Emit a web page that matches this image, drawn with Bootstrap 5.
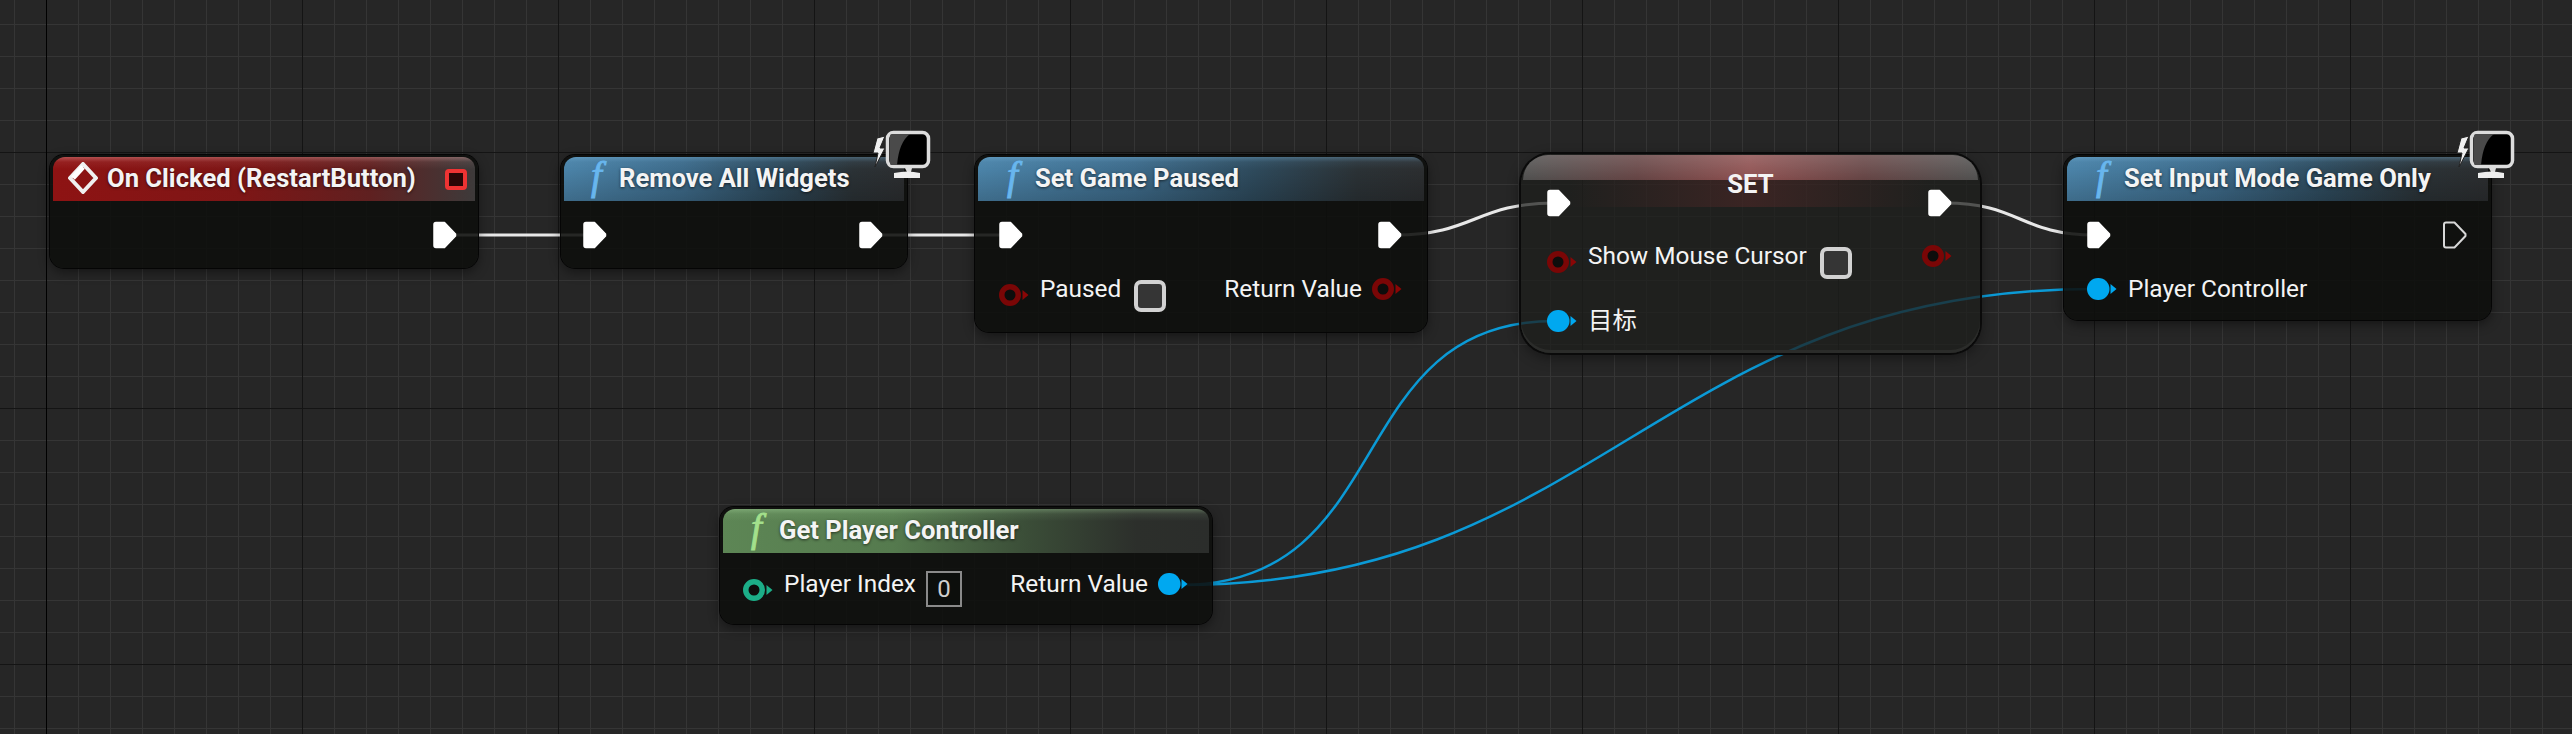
<!doctype html>
<html lang="zh">
<head>
<meta charset="utf-8">
<title>Blueprint</title>
<link href="https://cdn.jsdelivr.net/npm/bootstrap@5.3.0/dist/css/bootstrap.min.css" rel="stylesheet">
<style>
html,body{margin:0;height:100%;background:#262626;overflow:hidden}
.bp-canvas{position:relative;width:2572px;height:734px;overflow:hidden;background-color:#262626;font-family:Roboto,"Noto Sans CJK SC",sans-serif;color:#f4f4f4;
background-image:
 linear-gradient(90deg,#000 1px,transparent 1px),
 linear-gradient(90deg,#141414 1px,transparent 1px),
 linear-gradient(#141414 1px,transparent 1px),
 linear-gradient(90deg,#353535 1px,transparent 1px),
 linear-gradient(#353535 1px,transparent 1px);
background-size:2572px 734px,256px 256px,256px 256px,32px 32px,32px 32px;
background-repeat:no-repeat,repeat,repeat,repeat,repeat;
background-position:46px 0,46px 0,0 152px,14px 0,0 24px}
.bp-wires{position:absolute;left:0;top:0;width:2572px;height:734px}
.bp-node{position:absolute;background:rgba(13,15,12,.89);border-radius:14px;box-shadow:0 0 0 1px #050505,0 4px 12px rgba(0,0,0,.45);font-size:24.4px;line-height:32px}
.n-click{left:50px;top:155px;width:428px;height:113px}
.n-remove{left:561px;top:155px;width:346px;height:113px}
.n-pause{left:975px;top:155px;width:452px;height:177px}
.n-set{left:1521px;top:154px;width:459px;height:199px;border-radius:30px;background:rgba(30,31,29,.74);box-shadow:0 0 0 2px #0a0a0a,inset 0 -3px 0 #2b2c2a,0 4px 14px rgba(0,0,0,.45)}
.n-input{left:2064px;top:155px;width:427px;height:165px}
.n-player{left:720px;top:507px;width:492px;height:117px}
.bp-head{height:44px;margin:2px 3px 0;padding-bottom:2px;border-radius:12px 12px 0 0;font-weight:700;font-size:25.6px;white-space:nowrap;text-shadow:0 1px 3px rgba(0,0,0,.6)}
.h-blue{background:linear-gradient(180deg,rgba(130,190,230,.35) 0,rgba(130,190,230,.08) 5px,rgba(0,0,0,0) 12px,rgba(0,0,0,.18) 100%),linear-gradient(90deg,#4b83a8 0,#3d6a89 35%,#2e4a5c 62%,#2b3236 85%,#2c2e30 100%)}
.h-red{background:linear-gradient(180deg,rgba(255,190,190,.35) 0,rgba(255,190,190,.08) 5px,rgba(0,0,0,0) 12px),linear-gradient(90deg,#8e1313 0,#7d1616 45%,#5f2020 75%,#3d3a3a 100%)}
.h-green{background:linear-gradient(180deg,rgba(190,240,180,.3) 0,rgba(190,240,180,.08) 5px,rgba(0,0,0,0) 12px),linear-gradient(90deg,#5d8655 0,#557a4e 35%,#3b4e38 62%,#2c2f2b 85%,#2b2d2b 100%)}
.h-set{position:absolute;left:2px;right:2px;top:1px;height:25px;border-radius:28px 28px 0 0;background:linear-gradient(180deg,rgba(255,255,255,.18) 0,rgba(255,255,255,.03) 100%),linear-gradient(90deg,#4a4a49 0,#5f3d3d 25%,#8a4a4a 50%,#5f3d3d 75%,#4a4a49 100%)}
.h-set2{position:absolute;left:2px;right:2px;top:26px;height:27px;background:linear-gradient(90deg,rgba(120,50,50,0) 10%,rgba(110,45,45,.35) 50%,rgba(120,50,50,0) 90%)}
.set-title{position:relative;text-align:center;font-weight:700;font-size:25.6px;line-height:32px;padding-top:14px;height:30px}
.fn-glyph{font-family:"Liberation Serif",serif;font-style:italic;font-size:39px;line-height:44px;font-weight:400;color:#68b6ee;width:28px;margin-top:-5px;text-shadow:none;-webkit-text-stroke:.9px currentColor}
.h-green .fn-glyph{color:#a3e08c}
.pad-click{padding-left:15px}
.pad-remove{padding-left:27px}
.pad-pause{padding-left:29px}
.pad-input{padding-left:29px}
.pad-player{padding-left:28px}
.bp-row{display:flex;align-items:center;justify-content:space-between}
.r-exec{height:68px}
.r-data{height:40px}
.r-low{margin-top:11px}
.p-click{padding:0 21px 0 24px}
.p-remove{padding:0 24px 0 22px}
.p-pause{padding:0 25px 0 24px}
.p-input{padding:0 24px 0 23px}
.p-player{padding:0 24px 0 23px}
.p-set{position:relative;padding:0 28px 0 26px}
.r-setexec{height:40px;margin-top:-1px}
.r-setdata1{height:66px}
.r-setdata2{height:64px}
.pin-exec{display:block;width:24px;height:28px;flex:none}
.pin-data{display:block;width:30px;height:22px;flex:none}
.pin-low{margin-top:11px}
.pin-set{margin-top:12px}
.pin-gap{margin-left:10px}
.lbl{white-space:nowrap}
.lbl-l{margin-left:11px}
.box-check{display:block;width:32px;height:32px;flex:none;border:4px solid #d2d2d2;border-radius:7px;background:#353535;margin-left:13px;margin-top:13px}
.box-num{display:flex;align-items:center;justify-content:center;width:36px;height:36px;flex:none;border:2px solid #8a8a8a;margin-left:10px;margin-top:10px;color:#cfcfcf;background:#0c0e0c;font-size:24px}
.ev-stop{display:block;width:22px;height:21px;border:4px solid #ee3333;border-radius:4px;background:#2a0606;margin-left:auto;margin-right:8px;margin-top:2px}
.ev-icon{display:block;width:30px;height:32px;margin-right:9px;flex:none}
.mon{position:absolute;display:block;width:60px;height:50px}
.mon-remove{left:311px;top:-25px}
.mon-input{left:392px;top:-25px}
.head-ctr{display:flex;align-items:center}
.left-group{display:flex;align-items:center}
</style>
</head>
<body>
<div class="bp-canvas">
<svg width="0" height="0" class="position-absolute">
 <defs>
  <symbol id="exec" viewBox="0 0 24 28"><path d="M3 1.5H11.5L22.5 13V15L11.5 26.5H3Q1 26.5 1 24.5V3.5Q1 1.5 3 1.5Z" fill="#fff" stroke="#fff" stroke-width="1.5" stroke-linejoin="round"/></symbol>
  <symbol id="exec-o" viewBox="0 0 24 28"><path d="M3 1.5H11.5L22.5 13V15L11.5 26.5H3Q1 26.5 1 24.5V3.5Q1 1.5 3 1.5Z" fill="none" stroke="#d8d8d8" stroke-width="2" stroke-linejoin="round"/></symbol>
  <symbol id="pin-red" viewBox="0 0 30 22"><circle cx="11" cy="11" r="8.25" fill="#0d0d0c" stroke="#7a0606" stroke-width="5.5"/><path d="M23.5 6L29.5 11L23.5 16Z" fill="#8a0606"/></symbol>
  <symbol id="pin-teal" viewBox="0 0 30 22"><circle cx="11" cy="11" r="8.25" fill="#0d0d0c" stroke="#1cae88" stroke-width="5.5"/><path d="M23.5 6L29.5 11L23.5 16Z" fill="#1cae88"/></symbol>
  <symbol id="pin-blue" viewBox="0 0 30 22"><rect x="0" y="0" width="22.5" height="22" rx="11" fill="#00a8f0"/><path d="M23.5 6L29.5 11L23.5 16Z" fill="#00a8f0"/></symbol>
  <symbol id="monitor" viewBox="0 0 60 50">
   <path d="M5 8L13 6L8 18H13L3 37L6 23H1Z" fill="#f0f0f0" stroke="#222" stroke-width="1"/>
   <rect x="15.5" y="2.5" width="41" height="34" rx="6" fill="#000" stroke="#dcdcdc" stroke-width="3.5"/>
   <path d="M18 6Q18 4 20 4H38Q27 12 25 35H19Q18 35 18 33Z" fill="#4a4a4a"/>
   <path d="M33 38L35 42H39L40 38Z" fill="#dcdcdc"/>
   <path d="M22 43Q36 40 48 43V48H22Z" fill="#eee"/>
  </symbol>
 </defs>
</svg>

<svg class="bp-wires" viewBox="0 0 2572 734" fill="none">
 <g stroke="#e8e8e8" stroke-width="3">
  <path d="M450 235H590"/>
  <path d="M876 235H1005"/>
  <path d="M1395 235C1475 235 1475 203 1555 203"/>
  <path d="M1945 203C2020 203 2020 235 2095 235"/>
 </g>
 <g stroke="#0b9ad6" stroke-width="2.5">
  <path d="M1180 585C1400 585 1340 321 1555 321"/>
  <path d="M1180 585C1600 585 1660 289 2095 289"/>
 </g>
</svg>

<div class="bp-node n-click">
 <div class="bp-head h-red head-ctr pad-click">
  <svg class="ev-icon" viewBox="0 0 30 32"><path d="M15 2L28 16L15 30L2 16Z" fill="none" stroke="#f0f0f0" stroke-width="4" stroke-linejoin="round"/><path d="M5 16L15 5" stroke="#fff" stroke-width="5"/></svg>
  <span>On Clicked (RestartButton)</span>
  <span class="ev-stop"></span>
 </div>
 <div class="bp-row r-exec p-click justify-content-end"><svg class="pin-exec"><use href="#exec"/></svg></div>
</div>

<div class="bp-node n-remove">
 <div class="bp-head h-blue head-ctr pad-remove"><span class="fn-glyph">f</span><span>Remove All Widgets</span></div>
 <div class="bp-row r-exec p-remove"><svg class="pin-exec"><use href="#exec"/></svg><svg class="pin-exec"><use href="#exec"/></svg></div>
 <svg class="mon mon-remove"><use href="#monitor"/></svg>
</div>

<div class="bp-node n-pause">
 <div class="bp-head h-blue head-ctr pad-pause"><span class="fn-glyph">f</span><span>Set Game Paused</span></div>
 <div class="bp-row r-exec p-pause"><svg class="pin-exec"><use href="#exec"/></svg><svg class="pin-exec"><use href="#exec"/></svg></div>
 <div class="bp-row r-data p-pause">
  <div class="left-group"><svg class="pin-data pin-low"><use href="#pin-red"/></svg><span class="lbl lbl-l">Paused</span><span class="box-check"></span></div>
  <div class="left-group"><span class="lbl">Return Value</span><svg class="pin-data pin-gap"><use href="#pin-red"/></svg></div>
 </div>
</div>

<div class="bp-node n-set">
 <div class="h-set"></div><div class="h-set2"></div>
 <div class="set-title">SET</div>
 <div class="bp-row r-setexec p-set"><svg class="pin-exec"><use href="#exec"/></svg><svg class="pin-exec"><use href="#exec"/></svg></div>
 <div class="bp-row r-setdata1 p-set">
  <div class="left-group"><svg class="pin-data pin-set"><use href="#pin-red"/></svg><span class="lbl lbl-l">Show Mouse Cursor</span><span class="box-check"></span></div>
  <svg class="pin-data"><use href="#pin-red"/></svg>
 </div>
 <div class="bp-row r-setdata2 p-set justify-content-start">
  <svg class="pin-data"><use href="#pin-blue"/></svg><span class="lbl lbl-l">目标</span>
 </div>
</div>

<div class="bp-node n-input">
 <div class="bp-head h-blue head-ctr pad-input"><span class="fn-glyph">f</span><span>Set Input Mode Game Only</span></div>
 <div class="bp-row r-exec p-input"><svg class="pin-exec"><use href="#exec"/></svg><svg class="pin-exec"><use href="#exec-o"/></svg></div>
 <div class="bp-row r-data p-input justify-content-start"><svg class="pin-data"><use href="#pin-blue"/></svg><span class="lbl lbl-l">Player Controller</span></div>
 <svg class="mon mon-input"><use href="#monitor"/></svg>
</div>

<div class="bp-node n-player">
 <div class="bp-head h-green head-ctr pad-player"><span class="fn-glyph">f</span><span>Get Player Controller</span></div>
 <div class="bp-row p-player r-data r-low">
  <div class="left-group"><svg class="pin-data pin-set"><use href="#pin-teal"/></svg><span class="lbl lbl-l">Player Index</span><span class="box-num">0</span></div>
  <div class="left-group"><span class="lbl">Return Value</span><svg class="pin-data pin-gap"><use href="#pin-blue"/></svg></div>
 </div>
</div>
</div>
<script src="https://cdn.jsdelivr.net/npm/bootstrap@5.3.0/dist/js/bootstrap.bundle.min.js"></script>
</body>
</html>
